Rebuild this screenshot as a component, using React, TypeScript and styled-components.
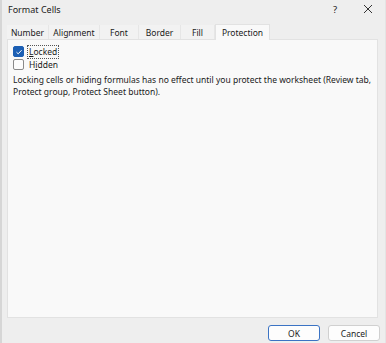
import styled, { createGlobalStyle } from 'styled-components'

const GlobalStyle = createGlobalStyle`
  html, body {
    margin: 0;
    padding: 0;
    background: #eeeeee;
  }
  * {
    box-sizing: border-box;
  }
`

const tabs = ['Number', 'Alignment', 'Font', 'Border', 'Fill', 'Protection']
const tabWidths = [42, 51, 39, 42, 34, 55]

const App: React.FC = () => {
  return (
    <>
      <GlobalStyle />
      <Dialog>
        <TitleBar>
          <Title>Format Cells</Title>
          <TitleButtons>
            <HelpButton>?</HelpButton>
            <CloseButton>
              <svg width="10" height="10" viewBox="0 0 10 10">
                <path d="M1 1 L9 9 M9 1 L1 9" stroke="#333" strokeWidth="1" fill="none" />
              </svg>
            </CloseButton>
          </TitleButtons>
        </TitleBar>
        <TabStrip>
          {tabs.map((t, i) => (
            <Tab key={t} active={t === 'Protection'} style={{ width: tabWidths[i] }}>
              {t}
            </Tab>
          ))}
        </TabStrip>
        <Panel>
          <CheckRow>
            <Box checked>
              <svg width="8" height="8" viewBox="0 0 8 8">
                <path d="M1.5 4.2 L3.2 5.8 L6.6 2.2" stroke="#fff" strokeWidth="1" fill="none" />
              </svg>
            </Box>
            <Label focused>
              <u>L</u>ocked
            </Label>
          </CheckRow>
          <CheckRow>
            <Box />
            <Label>
              H<u>i</u>dden
            </Label>
          </CheckRow>
          <Note>
            Locking cells or hiding formulas has no effect until you protect the worksheet (Review tab,
            Protect group, Protect Sheet button).
          </Note>
        </Panel>
        <Footer>
          <Button primary>OK</Button>
          <Button>Cancel</Button>
        </Footer>
      </Dialog>
    </>
  )
}

export default App

const Dialog = styled.div`
  width: 386px;
  height: 343px;
  display: flex;
  flex-direction: column;
  background: #eeeeee;
  border-left: 2px solid #d6d6d6;
  border-right: 1px solid #e4e4e4;
  font-family: 'Noto Sans', 'Open Sans', sans-serif;
  font-size: 8.5px;
  color: #1a1a1a;
`

const TitleBar = styled.div`
  height: 22px;
  display: flex;
  align-items: center;
  justify-content: space-between;
  padding-left: 6px;
  padding-bottom: 4px;
`

const Title = styled.div`
  font-size: 9px;
`

const TitleButtons = styled.div`
  display: flex;
  align-items: center;
`

const HelpButton = styled.div`
  width: 32px;
  text-align: center;
  font-size: 9.5px;
`

const CloseButton = styled.div`
  width: 34px;
  display: flex;
  justify-content: center;
`

const TabStrip = styled.div`
  display: flex;
  align-items: flex-end;
  margin-left: 5px;
  height: 17px;
`

const Tab = styled.div<{ active?: boolean }>`
  height: ${({ active }) => (active ? '16px' : '14px')};
  display: flex;
  align-items: center;
  justify-content: center;
  background: ${({ active }) => (active ? '#f9f9f9' : '#f2f2f2')};
  border-right: 1px solid ${({ active }) => (active ? '#e2e2e2' : '#e6e6e6')};
  border-left: ${({ active }) => (active ? '1px solid #e2e2e2' : 'none')};
  border-top: ${({ active }) => (active ? '1px solid #e2e2e2' : 'none')};
  margin-bottom: ${({ active }) => (active ? '-1px' : '0')};
  position: relative;
  z-index: ${({ active }) => (active ? 1 : 0)};
`

const Panel = styled.div`
  flex: 1;
  margin: 0 7px 0 5px;
  background: #f9f9f9;
  border: 1px solid #e2e2e2;
  padding: 5px 5px;
`

const CheckRow = styled.div`
  display: flex;
  align-items: center;
  height: 13px;
  gap: 3px;
`

const Box = styled.div<{ checked?: boolean }>`
  width: 11px;
  height: 11px;
  border-radius: 2px;
  display: flex;
  align-items: center;
  justify-content: center;
  background: ${({ checked }) => (checked ? '#1c5fb4' : '#fdfdfd')};
  border: 1px solid ${({ checked }) => (checked ? '#1c5fb4' : '#8a8a8a')};
`

const Label = styled.span<{ focused?: boolean }>`
  padding: 0 1px;
  line-height: 12px;
  border: 1px ${({ focused }) => (focused ? 'dotted #555' : 'solid transparent')};
`

const Note = styled.p`
  margin: 3px 0 0;
  line-height: 12px;
`

const Footer = styled.div`
  height: 25px;
  display: flex;
  align-items: flex-start;
  justify-content: flex-end;
  gap: 8px;
  padding: 7px 5px 0 0;
`

const Button = styled.button<{ primary?: boolean }>`
  width: 52px;
  height: 16px;
  padding: 0;
  font: inherit;
  color: #1a1a1a;
  background: #fdfdfd;
  border-radius: 3px;
  border: 1px solid ${({ primary }) => (primary ? '#3b73c4' : '#d0d0d0')};
`
